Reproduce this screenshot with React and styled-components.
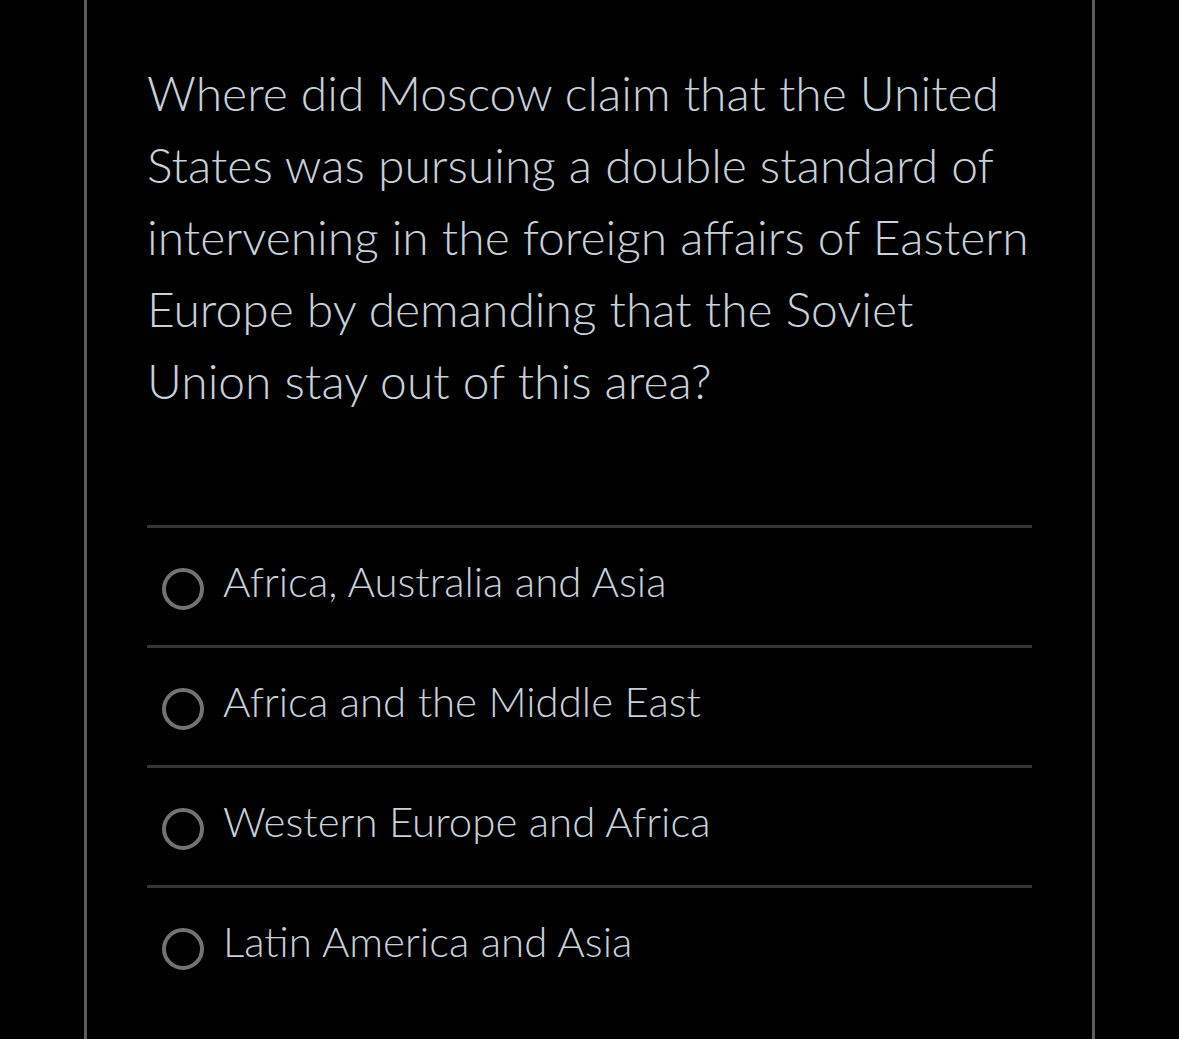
import React from "react";
import styled, { createGlobalStyle } from "styled-components";

const Global = createGlobalStyle`
  html, body { margin: 0; padding: 0; background: #000; }
  body { font-family: "Lato Light", Lato, "Open Sans", sans-serif; }
`;

const Page = styled.div`
  min-height: 1039px;
  background: #000;
  display: flex;
  justify-content: flex-start;
  padding-left: 84px;
  box-sizing: border-box;
`;

const Card = styled.div`
  width: 1011px;
  min-height: 1039px;
  box-sizing: border-box;
  border-left: 3px solid #5c5c5c;
  border-right: 3px solid #5c5c5c;
  padding: 57px 60px 0 60px;
`;

const Question = styled.p`
  margin: 0 0 108px 0;
  font-family: "Lato Light", Lato, sans-serif;
  font-size: 48px;
  font-weight: 300;
  line-height: 72px;
  color: #c6d1db;
`;

const Options = styled.div`
  display: flex;
  flex-direction: column;
`;

const Option = styled.label`
  display: flex;
  align-items: center;
  gap: 19px;
  height: 120px;
  box-sizing: border-box;
  padding: 4px 0 0 15px;
  border-top: ${(p) => (p.$divider ? "3px solid #343434" : "none")};
`;

const Radio = styled.span`
  width: 42px;
  height: 42px;
  box-sizing: border-box;
  border-radius: 50%;
  border: 4px solid #727275;
  flex-shrink: 0;
`;

const OptionText = styled.span`
  font-family: "Lato Light", Lato, sans-serif;
  font-size: 42px;
  font-weight: 300;
  color: #c6d1db;
  line-height: 1;
  padding-bottom: 16px;
`;

const options = [
  "Africa, Australia and Asia",
  "Africa and the Middle East",
  "Western Europe and Africa",
  "Latin America and Asia",
];

export default function App() {
  return (
    <>
      <Global />
      <Page>
        <Card>
          <Question>
            Where did Moscow claim that the United States was pursuing a double
            standard of intervening in the foreign affairs of Eastern Europe by
            demanding that the Soviet Union stay out of this area?
          </Question>
          <Options>
            {options.map((o) => (
              <Option key={o} $divider>
                <Radio />
                <OptionText>{o}</OptionText>
              </Option>
            ))}
          </Options>
        </Card>
      </Page>
    </>
  );
}
